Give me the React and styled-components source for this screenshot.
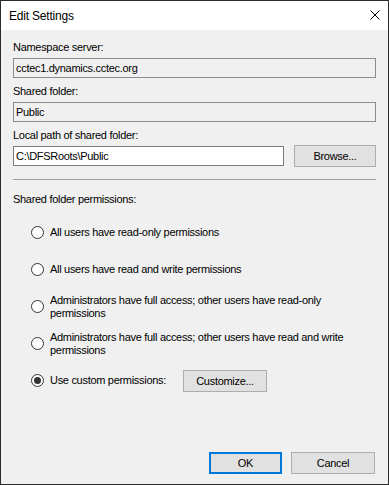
import React from 'react';
import styled, { createGlobalStyle } from 'styled-components';

const GlobalStyle = createGlobalStyle`
  html, body {
    margin: 0;
    padding: 0;
    background: #ffffff;
  }

  body {
    font-family: "Liberation Sans", Arial, sans-serif;
  }
`;

const Window = styled.div`
  box-sizing: border-box;
  width: 389px;
  height: 485px;
  border: 1px solid #2b2b2b;
  background: #f0f0f0;
  display: flex;
  flex-direction: column;
  font-size: 11px;
  letter-spacing: -0.3px;
  color: #000000;
`;

const TitleBar = styled.div`
  height: 29px;
  flex: 0 0 auto;
  background: #ffffff;
  display: flex;
  align-items: center;
  justify-content: space-between;
  padding: 0 8px 0 8px;
`;

const Title = styled.span`
  font-size: 12px;
  letter-spacing: -0.2px;
`;

const CloseIcon = styled.svg`
  width: 10px;
  height: 10px;
  margin-bottom: 1px;
`;

const Body = styled.div`
  flex: 1;
  display: flex;
  flex-direction: column;
  padding: 10px 12px 10px 12px;
`;

const Field = styled.div`
  display: flex;
  flex-direction: column;
  margin-bottom: 6px;
`;

const Label = styled.label`
  display: block;
  line-height: 15px;
`;

const TextBox = styled.div`
  box-sizing: border-box;
  height: 20px;
  margin-top: ${p => (p.$inRow ? '0' : '3px')};
  padding: 0 2px;
  line-height: 18px;
  border: 1px solid ${p => (p.$disabled ? '#8c8c8c' : '#7a7a7a')};
  background: ${p => (p.$disabled ? '#f0f0f0' : '#ffffff')};
  flex: ${p => (p.$inRow ? '0 0 271px' : 'none')};
  white-space: nowrap;
  overflow: hidden;
`;

const PathRow = styled.div`
  display: flex;
  align-items: center;
  gap: 10px;
  margin-top: 2px;
`;

const Button = styled.button`
  box-sizing: border-box;
  width: ${p => p.$width}px;
  height: 22px;
  margin: 0;
  padding: 0;
  font-family: inherit;
  font-size: 11px;
  letter-spacing: -0.3px;
  color: #000000;
  background: #e1e1e1;
  border: ${p => (p.$default ? '2px solid #0078d7' : '1px solid #adadad')};
  margin-left: ${p => p.$offset || 0}px;
`;

const Separator = styled.div`
  height: 1px;
  background: #a0a0a0;
  margin: 6px 0 12px;
`;

const Options = styled.div`
  display: flex;
  flex-direction: column;
  margin-top: 7px;
`;

const Option = styled.div`
  height: 37px;
  display: flex;
  align-items: center;
  padding-left: 18px;
`;

const Radio = styled.span`
  box-sizing: border-box;
  flex: 0 0 13px;
  width: 13px;
  height: 13px;
  border: 1px solid #333333;
  border-radius: 50%;
  background: #ffffff;
  margin-right: 6px;
  display: flex;
  align-items: center;
  justify-content: center;

  &::after {
    content: '';
    width: 7px;
    height: 7px;
    border-radius: 50%;
    background: ${p => (p.$checked ? '#333333' : 'transparent')};
  }
`;

const OptionText = styled.span`
  line-height: 13px;
  flex: 1;
`;

const CustomText = styled.span`
  line-height: 13px;
`;

const Footer = styled.div`
  margin-top: auto;
  display: flex;
  justify-content: flex-end;
  gap: 9px;
  padding-right: 1px;
`;

const permissions = [
  'All users have read-only permissions',
  'All users have read and write permissions',
  'Administrators have full access; other users have read-only permissions',
  'Administrators have full access; other users have read and write permissions'
];

const App = () => (
  <>
    <GlobalStyle />
    <Window>
      <TitleBar>
        <Title>Edit Settings</Title>
        <CloseIcon viewBox="0 0 10 10">
          <path d="M0.5 0.5 L9.5 9.5 M9.5 0.5 L0.5 9.5" stroke="#000" strokeWidth="1" fill="none" />
        </CloseIcon>
      </TitleBar>
      <Body>
        <Field>
          <Label>Namespace server:</Label>
          <TextBox $disabled>cctec1.dynamics.cctec.org</TextBox>
        </Field>
        <Field>
          <Label>Shared folder:</Label>
          <TextBox $disabled>Public</TextBox>
        </Field>
        <Field>
          <Label>Local path of shared folder:</Label>
          <PathRow>
            <TextBox $inRow>C:\DFSRoots\Public</TextBox>
            <Button $width={83}>Browse...</Button>
          </PathRow>
        </Field>
        <Separator />
        <Label>Shared folder permissions:</Label>
        <Options>
          {permissions.map(text => (
            <Option key={text}>
              <Radio />
              <OptionText>{text}</OptionText>
            </Option>
          ))}
          <Option>
            <Radio $checked />
            <CustomText>Use custom permissions:</CustomText>
            <Button $width={84} $offset={17}>Customize...</Button>
          </Option>
        </Options>
        <Footer>
          <Button $width={73} $default>OK</Button>
          <Button $width={84}>Cancel</Button>
        </Footer>
      </Body>
    </Window>
  </>
);

export default App;
